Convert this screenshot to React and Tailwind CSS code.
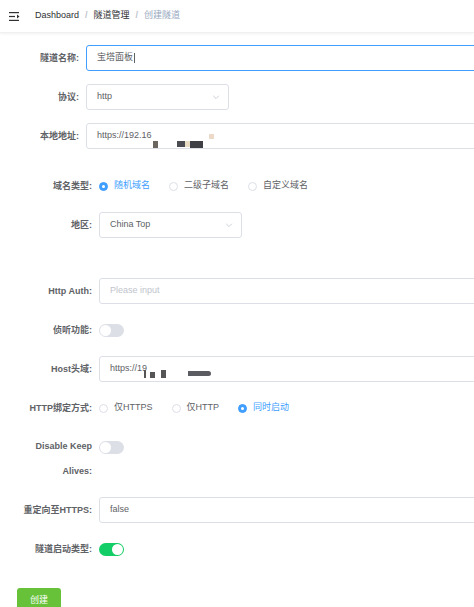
import React, { useState } from 'react';

const font = { fontFamily: '"Liberation Sans", "Noto Sans CJK SC", sans-serif' };

const Label = ({ w, children }) => (
  <div className={`${w} shrink-0 pr-[7px] text-right text-[9px] font-bold text-[#606266] leading-[26px]`}>
    {children}
  </div>
);

const TextInput = ({ value, placeholder, focused, children }) => (
  <div
    className={`relative h-[26px] w-[420px] shrink-0 rounded-[3px] border bg-white px-[10px] flex items-center text-[9px] text-[#606266] ${
      focused ? 'border-[#409eff]' : 'border-[#dcdfe6]'
    }`}
  >
    {value ? <span>{value}</span> : <span className="text-[#c0c4cc]">{placeholder}</span>}
    {focused && <span className="ml-px h-[10px] w-px bg-[#606266]" />}
    {children}
  </div>
);

const Select = ({ value, w }) => (
  <div className={`${w} h-[26px] shrink-0 rounded-[3px] border border-[#dcdfe6] bg-white pl-[10px] pr-[8px] flex items-center justify-between text-[9px] text-[#606266]`}>
    <span>{value}</span>
    <svg width="8" height="8" viewBox="0 0 10 10" fill="none" stroke="#c0c4cc" strokeWidth="1">
      <path d="M1.5 3.5 L5 7 L8.5 3.5" />
    </svg>
  </div>
);

const Radio = ({ checked, label }) => (
  <label className="flex items-center gap-[6px] text-[9px]">
    <span
      className={`w-[9px] h-[9px] rounded-full border flex items-center justify-center ${
        checked ? 'border-[#409eff] bg-[#409eff]' : 'border-[#dcdfe6] bg-white'
      }`}
    >
      {checked && <span className="w-[3px] h-[3px] rounded-full bg-white" />}
    </span>
    <span className={checked ? 'text-[#409eff]' : 'text-[#606266]'}>{label}</span>
  </label>
);

const Switch = ({ on }) => (
  <div className={`relative w-[25px] h-[13px] rounded-full ${on ? 'bg-[#13ce66]' : 'bg-[#dcdfe6]'}`}>
    <span
      className={`absolute top-[1px] w-[11px] h-[11px] rounded-full bg-white ${on ? 'left-[13px]' : 'left-[1px]'}`}
    />
  </div>
);

const Row = ({ label, w, children, className = '' }) => (
  <div className={`flex items-start mb-[13px] ${className}`}>
    <Label w={w}>{label}</Label>
    <div className="flex items-center h-[26px]">{children}</div>
  </div>
);

export default function App() {
  const [name] = useState('宝塔面板');

  return (
    <div className="w-[474px] h-[607px] overflow-hidden bg-white" style={font}>
      {/* Header */}
      <header className="h-[33px] flex items-center pl-[9px] border-b border-[#f0f0f0] shadow-[0_1px_3px_rgba(0,21,41,0.06)]">
        <svg width="11" height="9" viewBox="0 0 11 9" fill="#303133">
          <rect x="0" y="0" width="10" height="1.2" />
          <rect x="0" y="3.9" width="6" height="1.2" />
          <rect x="0" y="7.8" width="10" height="1.2" />
          <path d="M8 2.5 L10.5 4.5 L8 6.5 Z" />
        </svg>
        <nav className="ml-[15px] flex items-center text-[9px]">
          <span className="text-[#303133]">Dashboard</span>
          <span className="mx-[6px] text-[#c0c4cc] font-bold">/</span>
          <span className="text-[#303133]">隧道管理</span>
          <span className="mx-[6px] text-[#c0c4cc] font-bold">/</span>
          <span className="text-[#97a8be]">创建隧道</span>
        </nav>
      </header>

      <div className="pt-[12px]">
        <Row label="隧道名称:" w="w-[86px]">
          <TextInput value={name} focused />
        </Row>
        <Row label="协议:" w="w-[86px]">
          <Select value="http" w="w-[143px]" />
        </Row>
        <Row label="本地地址:" w="w-[86px]">
          <TextInput value="https://192.16">
            <span className="absolute left-[66px] top-[17px] w-[5px] h-[7px] bg-[#6b6560]" />
            <span className="absolute left-[90px] top-[17px] w-[8px] h-[6px] bg-[#4b4b52]" />
            <span className="absolute left-[98px] top-[17px] w-[5px] h-[6px] bg-[#e8dcc4]" />
            <span className="absolute left-[103px] top-[17px] w-[13px] h-[7px] bg-[#3f3f46]" />
            <span className="absolute left-[122px] top-[10px] w-[5px] h-[5px] bg-[#ecd9c8]" />
          </TextInput>
        </Row>

        <div className="mt-[24px]">
          <Row label="域名类型:" w="w-[99px]">
            <div className="flex items-center gap-[19px]">
              <Radio checked label="随机域名" />
              <Radio label="二级子域名" />
              <Radio label="自定义域名" />
            </div>
          </Row>
          <Row label="地区:" w="w-[99px]">
            <Select value="China Top" w="w-[143px]" />
          </Row>
          <Row label="Http Auth:" w="w-[99px]" className="mt-[40px]">
            <TextInput placeholder="Please input" />
          </Row>
          <Row label="侦听功能:" w="w-[99px]">
            <Switch />
          </Row>
          <Row label="Host头域:" w="w-[99px]">
            <TextInput value="https://19">
              <span className="absolute left-[44px] top-[13px] w-[2px] h-[8px] bg-[#555]" />
              <span className="absolute left-[50px] top-[15px] w-[5px] h-[6px] bg-[#555]" />
              <span className="absolute left-[61px] top-[13px] w-[5px] h-[8px] bg-[#555]" />
              <span className="absolute left-[88px] top-[14px] w-[23px] h-[5px] bg-[#5b5b62] rounded-r-[3px]" />
            </TextInput>
          </Row>
          <Row label="HTTP绑定方式:" w="w-[99px]">
            <div className="flex items-center gap-[19px]">
              <Radio label="仅HTTPS" />
              <Radio label="仅HTTP" />
              <Radio checked label="同时启动" />
            </div>
          </Row>
          <div className="flex items-start mb-[13px]">
            <div className="w-[99px] shrink-0 pr-[7px] text-right text-[9px] font-bold text-[#606266] leading-[25px]">
              Disable Keep
              <br />
              Alives:
            </div>
            <div className="flex items-center h-[26px]">
              <Switch />
            </div>
          </div>
          <Row label="重定向至HTTPS:" w="w-[99px]" className="mt-[2px]">
            <TextInput value="false" />
          </Row>
          <Row label="隧道启动类型:" w="w-[99px]">
            <Switch on />
          </Row>
        </div>

        <div className="pl-[17px] pt-[11px]">
          <button className="w-[44px] h-[26px] rounded-[3px] bg-[#67c23a] text-white text-[9px]">创建</button>
        </div>
      </div>
    </div>
  );
}
